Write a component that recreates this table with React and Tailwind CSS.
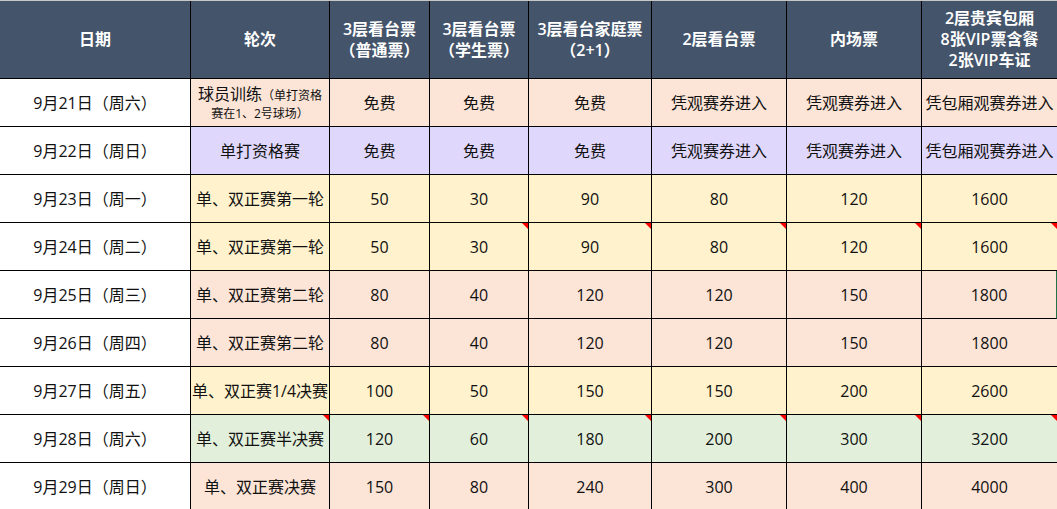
import React from 'react';

const PEACH = 'bg-[#fce4d6]';
const LAVENDER = 'bg-[#e0d8fc]';
const YELLOW = 'bg-[#fff2cc]';
const GREEN = 'bg-[#e2efda]';

const FREE = ['免费', '免费', '免费', '凭观赛券进入', '凭观赛券进入', '凭包厢观赛券进入'];

const headers = [
  ['日期'],
  ['轮次'],
  ['3层看台票', '（普通票）'],
  ['3层看台票', '（学生票）'],
  ['3层看台家庭票', '（2+1）'],
  ['2层看台票'],
  ['内场票'],
  ['2层贵宾包厢', '8张VIP票含餐', '2张VIP车证'],
];

const rows = [
  { date: '9月21日（周六）', round: null, bg: PEACH, vals: FREE },
  { date: '9月22日（周日）', round: '单打资格赛', bg: LAVENDER, vals: FREE },
  { date: '9月23日（周一）', round: '单、双正赛第一轮', bg: YELLOW, vals: ['50', '30', '90', '80', '120', '1600'] },
  { date: '9月24日（周二）', round: '单、双正赛第一轮', bg: YELLOW, vals: ['50', '30', '90', '80', '120', '1600'], marks: [1, 2, 3, 4, 5] },
  { date: '9月25日（周三）', round: '单、双正赛第二轮', bg: PEACH, vals: ['80', '40', '120', '120', '150', '1800'], edge: true },
  { date: '9月26日（周四）', round: '单、双正赛第二轮', bg: PEACH, vals: ['80', '40', '120', '120', '150', '1800'] },
  { date: '9月27日（周五）', round: '单、双正赛1/4决赛', bg: YELLOW, vals: ['100', '50', '150', '150', '200', '2600'] },
  { date: '9月28日（周六）', round: '单、双正赛半决赛', bg: GREEN, vals: ['120', '60', '180', '200', '300', '3200'], marks: [0, 1, 2, 3, 4, 5], roundMark: true },
  { date: '9月29日（周日）', round: '单、双正赛决赛', bg: PEACH, vals: ['150', '80', '240', '300', '400', '4000'] },
];

const Note = () => (
  <div className="absolute top-0 right-0 w-0 h-0 border-t-[6px] border-l-[6px] border-t-[#ff0000] border-l-transparent" />
);

const Cell = ({ className = '', mark, last, children }) => (
  <div
    className={`relative h-[48px] flex items-center justify-center text-center whitespace-nowrap border-b border-black ${
      last ? '' : 'border-r'
    } ${className}`}
  >
    {children}
    {mark && <Note />}
  </div>
);

export default function App() {
  return (
    <div className="w-[1057px] h-[509px] overflow-hidden bg-white text-[#111] text-[16px] font-normal font-['Open_Sans','Noto_Sans_CJK_SC',sans-serif] border-t border-[#c8c8c8]">
      <div className="grid grid-cols-[191px_139px_100px_99px_123px_135px_135px_135px]">
        {headers.map((lines, i) => (
          <div
            key={i}
            className={`h-[78px] bg-[#44546a] text-white font-semibold leading-[21px] flex flex-col items-center justify-center text-center whitespace-nowrap border-b border-black ${
              i < headers.length - 1 ? 'border-r' : ''
            }`}
          >
            {lines.map((l) => (
              <span key={l}>{l}</span>
            ))}
          </div>
        ))}

        {rows.map((r) => (
          <React.Fragment key={r.date}>
            <Cell className="bg-white">{r.date}</Cell>
            <Cell className={r.bg} mark={r.roundMark}>
              {r.round ? (
                r.round
              ) : (
                <div className="leading-[18px] pt-[2px]">
                  <div>
                    球员训练<span className="text-[12px]">（单打资格</span>
                  </div>
                  <div className="text-[12px]">赛在1、2号球场）</div>
                </div>
              )}
            </Cell>
            {r.vals.map((v, j) => (
              <Cell
                key={j}
                className={`${r.bg} ${r.edge && j === 5 ? 'border-r border-r-[#217346]' : ''}`}
                mark={r.marks && r.marks.includes(j)}
                last={j === 5}
              >
                {v}
              </Cell>
            ))}
          </React.Fragment>
        ))}
      </div>
    </div>
  );
}
